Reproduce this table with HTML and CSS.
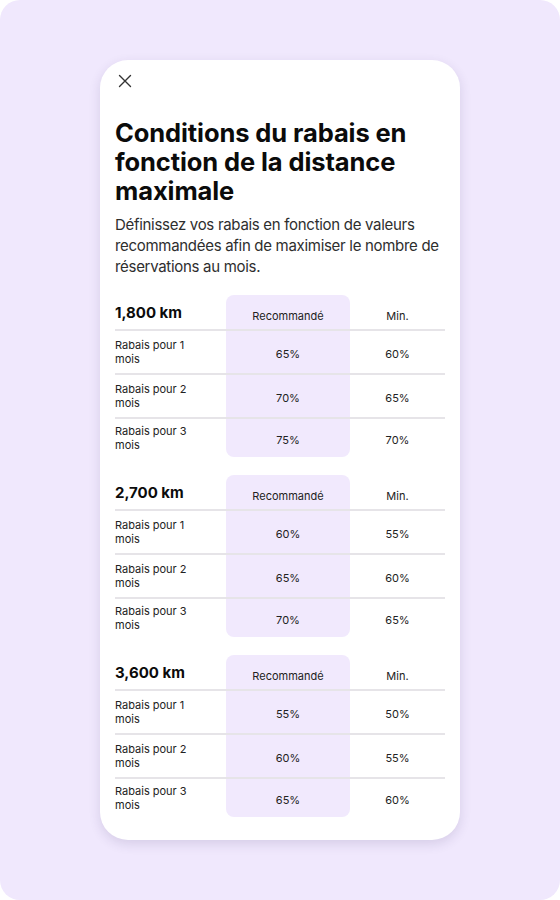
FILE: index.html
```html
<!DOCTYPE html>
<html lang="fr">
<head>
<meta charset="utf-8">
<link rel="stylesheet" href="styles.css">
</head>
<body>
<div class="stage">
  <div class="card">
    <button class="close" aria-label="Fermer">
      <svg width="14" height="14" viewBox="0 0 14 14"><path d="M1.5 1.5 L12.5 12.5 M12.5 1.5 L1.5 12.5" stroke="#333" stroke-width="1.4" stroke-linecap="round" fill="none"/></svg>
    </button>
    <h1 class="title">Conditions du rabais en fonction de la distance maximale</h1>
    <p class="intro">Définissez vos rabais en fonction de valeurs recommandées afin de maximiser le nombre de réservations au mois.</p>

    <div class="tables">
      <div class="grid">
        <div class="hl"></div>
        <div class="cell head label">1,800 km</div>
        <div class="cell head rec">Recommandé</div>
        <div class="cell head min">Min.</div>
        <div class="cell label">Rabais pour 1 mois</div>
        <div class="cell val">65%</div>
        <div class="cell val">60%</div>
        <div class="cell label">Rabais pour 2 mois</div>
        <div class="cell val">70%</div>
        <div class="cell val">65%</div>
        <div class="cell label last">Rabais pour 3 mois</div>
        <div class="cell val last">75%</div>
        <div class="cell val last">70%</div>
      </div>

      <div class="grid">
        <div class="hl"></div>
        <div class="cell head label">2,700 km</div>
        <div class="cell head rec">Recommandé</div>
        <div class="cell head min">Min.</div>
        <div class="cell label">Rabais pour 1 mois</div>
        <div class="cell val">60%</div>
        <div class="cell val">55%</div>
        <div class="cell label">Rabais pour 2 mois</div>
        <div class="cell val">65%</div>
        <div class="cell val">60%</div>
        <div class="cell label last">Rabais pour 3 mois</div>
        <div class="cell val last">70%</div>
        <div class="cell val last">65%</div>
      </div>

      <div class="grid">
        <div class="hl"></div>
        <div class="cell head label">3,600 km</div>
        <div class="cell head rec">Recommandé</div>
        <div class="cell head min">Min.</div>
        <div class="cell label">Rabais pour 1 mois</div>
        <div class="cell val">55%</div>
        <div class="cell val">50%</div>
        <div class="cell label">Rabais pour 2 mois</div>
        <div class="cell val">60%</div>
        <div class="cell val">55%</div>
        <div class="cell label last">Rabais pour 3 mois</div>
        <div class="cell val last">65%</div>
        <div class="cell val last">60%</div>
      </div>
    </div>
  </div>
</div>
</body>
</html>
```

FILE: styles.css
```css
* { box-sizing: border-box; }
html, body { margin: 0; padding: 0; background: #fff; }
body { font-family: Inter, "Noto Sans", sans-serif; color: #111; }

.stage {
  width: 560px;
  height: 900px;
  background: #f0e8fd;
  border-radius: 20px;
  padding-top: 60px;
  display: flex;
  justify-content: center;
  align-items: flex-start;
}

.card {
  width: 360px;
  height: 780px;
  background: #fff;
  border-radius: 28px;
  box-shadow: 0 4px 12px rgba(60, 40, 100, 0.14);
  padding: 14px 15px 23px;
}

.close {
  display: flex;
  align-items: center;
  justify-content: center;
  width: 22px;
  height: 14px;
  padding: 0;
  margin: 0 0 0 -1px;
  border: 0;
  background: none;
}

.title {
  margin: 30px 0 0;
  font-size: 25.5px;
  line-height: 29px;
  font-weight: 700;
  letter-spacing: -0.1px;
  color: #0b0b0b;
}

.intro {
  margin: 9px 0 0;
  font-size: 15px;
  line-height: 21px;
  letter-spacing: -0.3px;
  color: #2e2e2e;
}

.tables {
  margin-top: 18px;
  display: flex;
  flex-direction: column;
  gap: 18px;
}

.grid {
  display: grid;
  grid-template-columns: 111px 124px 95px;
  grid-template-rows: 36px 44px 44px 38px;
}

.hl {
  grid-column: 2;
  grid-row: 1 / 5;
  background: #f1e9fd;
  border-radius: 8px;
}

.cell {
  border-bottom: 2px solid #e6e4e8;
  display: flex;
  align-items: center;
  font-size: 11px;
  line-height: 14px;
  color: #222;
}
.cell.last { border-bottom: 0; }

.grid > .cell:nth-child(3n+2) { grid-column: 1; }
.grid > .cell:nth-child(3n+3) { grid-column: 2; }
.grid > .cell:nth-child(3n+4) { grid-column: 3; }

.grid > .cell:nth-child(-n+4) { grid-row: 1; }
.grid > .cell:nth-child(n+5):nth-child(-n+7) { grid-row: 2; }
.grid > .cell:nth-child(n+8):nth-child(-n+10) { grid-row: 3; }
.grid > .cell:nth-child(n+11) { grid-row: 4; }

.head { align-items: flex-end; }
.head.label {
  font-size: 15px;
  font-weight: 700;
  color: #0b0b0b;
  padding-bottom: 9px;
}
.head.rec, .head.min {
  justify-content: center;
  padding-bottom: 6px;
  font-size: 11px;
}
.label { padding-right: 20px; }
.val {
  justify-content: center;
  padding-top: 3px;
}
.cell.last.val { padding-top: 4px; }
.cell.last.label { padding-bottom: 0; }
```
